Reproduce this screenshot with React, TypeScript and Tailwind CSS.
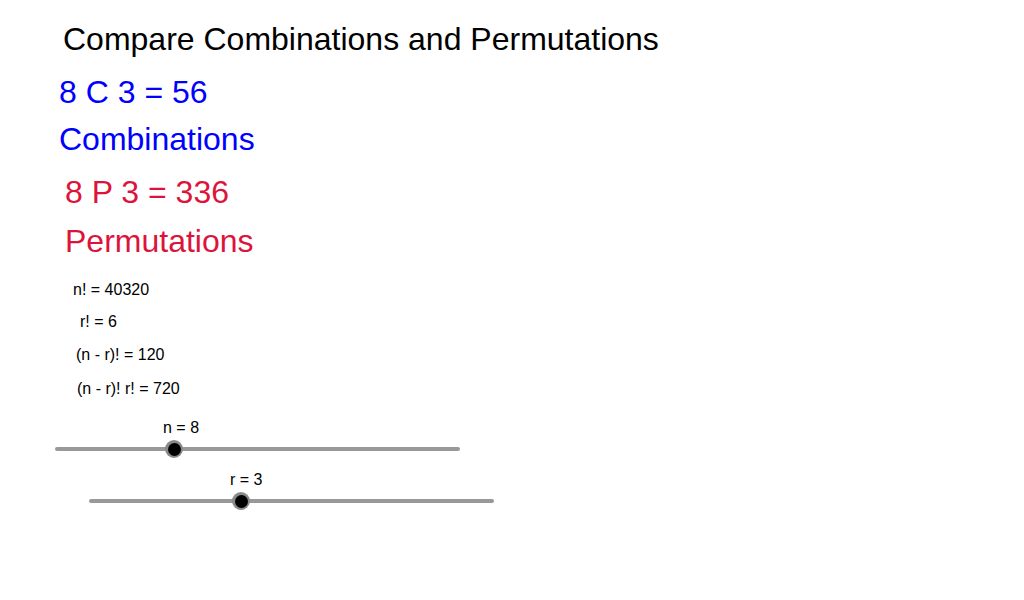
import React from "react";

type SliderProps = {
  label: string;
  labelLeft: number;
  trackLeft: number;
  trackWidth: number;
  value: number;
  min: number;
  max: number;
};

// GeoGebra-style horizontal slider: label above, grey rail, black point.
function Slider({ label, labelLeft, trackLeft, trackWidth, value, min, max }: SliderProps) {
  const pos = ((value - min) / (max - min)) * trackWidth;
  return (
    <>
      <div className="text-[16px] leading-none h-4 text-black" style={{ marginLeft: labelLeft }}>
        {label}
      </div>
      <div className="relative h-[18px] mt-1" style={{ marginLeft: trackLeft, width: trackWidth }}>
        <div className="absolute left-0 right-0 top-[7px] h-1 rounded-full bg-[#999999]" />
        <div
          className="absolute top-0 w-[18px] h-[18px] rounded-full bg-[#8a8a8a] flex items-center justify-center"
          style={{ left: pos - 9 }}
        >
          <div className="w-[13px] h-[13px] rounded-full bg-black" />
        </div>
      </div>
    </>
  );
}

export default function App() {
  const n = 8;
  const r = 3;
  const fact = (k: number): number => (k <= 1 ? 1 : k * fact(k - 1));
  const perm = fact(n) / fact(n - r);
  const comb = perm / fact(r);

  return (
    <div
      className="w-[1024px] h-[600px] bg-white overflow-hidden pt-[23px]"
      style={{ fontFamily: '"Liberation Sans", Arial, sans-serif' }}
    >
      <div className="text-[32px] leading-none h-8 ml-[63px] text-black">
        Compare Combinations and Permutations
      </div>

      <div className="text-[32px] leading-none h-8 ml-[59px] mt-[21px] text-[#0000ff]">
        {n} C {r} = {comb}
      </div>
      <div className="text-[32px] leading-none h-8 ml-[59px] mt-[15px] text-[#0000ff]">
        Combinations
      </div>

      <div className="text-[32px] leading-none h-8 ml-[65px] mt-[21px] text-[#dc143c]">
        {n} P {r} = {perm}
      </div>
      <div className="text-[32px] leading-none h-8 ml-[65px] mt-[17px] text-[#dc143c]">
        Permutations
      </div>

      <div className="text-[16px] leading-none h-4 ml-[73px] mt-[25px] text-black">
        n! = {fact(n)}
      </div>
      <div className="text-[16px] leading-none h-4 ml-[80px] mt-4 text-black">
        r! = {fact(r)}
      </div>
      <div className="text-[16px] leading-none h-4 ml-[76px] mt-[17px] text-black">
        (n - r)! = {fact(n - r)}
      </div>
      <div className="text-[16px] leading-none h-4 ml-[77px] mt-[18px] text-black">
        (n - r)! r! = {fact(n - r) * fact(r)}
      </div>

      <div className="mt-[23px]">
        <Slider label={`n = ${n}`} labelLeft={163} trackLeft={55} trackWidth={405} value={119} min={0} max={405} />
      </div>
      <div className="mt-[14px]">
        <Slider label={`r = ${r}`} labelLeft={230} trackLeft={89} trackWidth={405} value={152} min={0} max={405} />
      </div>
    </div>
  );
}
